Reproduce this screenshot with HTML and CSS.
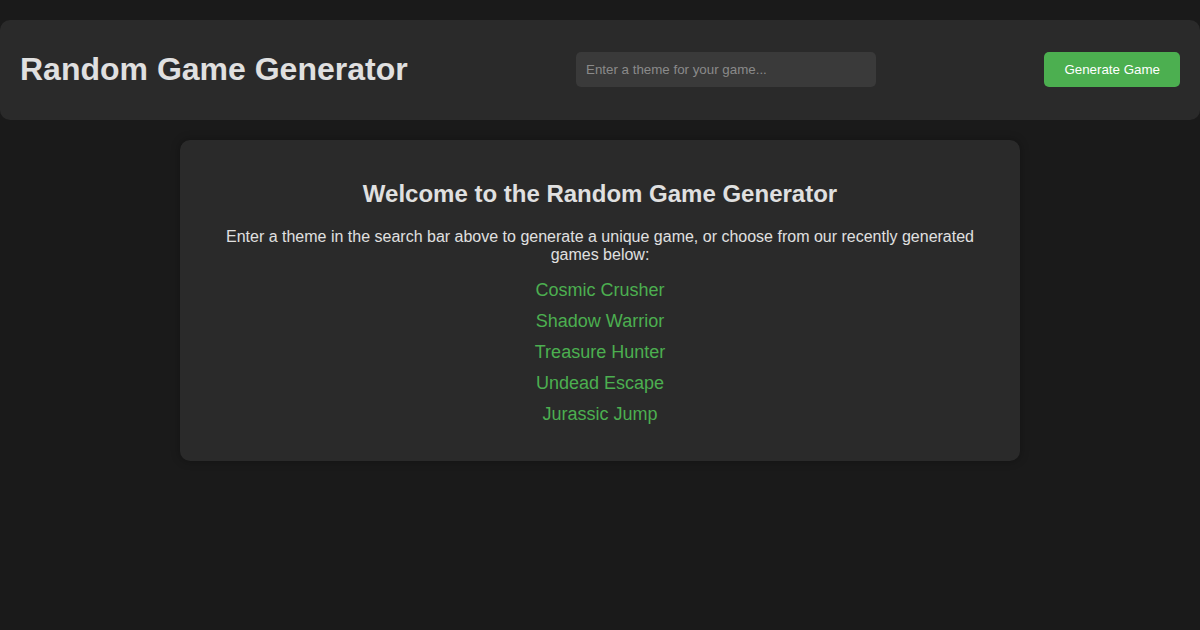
FILE: index.html
```html
<!DOCTYPE html>
<html lang="en">
<head>
  <meta charset="UTF-8" />
  <meta name="viewport" content="width=device-width, initial-scale=1.0" />
  <title>Random Game Generator</title>
  <link rel="stylesheet" href="styles.css">
</head>
<body>
  <header class="header">
    <h1>Random Game Generator</h1>
    <input type="text" id="theme" placeholder="Enter a theme for your game...">
    <button>Generate Game</button>
  </header>

  <div class="container">
    <h2>Welcome to the Random Game Generator</h2>
    <p>Enter a theme in the search bar above to generate a unique game, or choose from our recently generated games below:</p>
    <div class="games">
      <a href="#">Cosmic Crusher</a>
      <a href="#">Shadow Warrior</a>
      <a href="#">Treasure Hunter</a>
      <a href="#">Undead Escape</a>
      <a href="#">Jurassic Jump</a>
    </div>
  </div>
</body>
</html>
```

FILE: styles.css
```css
* {
  box-sizing: border-box;
}
body {
  font-family: "Liberation Sans", Arial, sans-serif;
  background-color: #1a1a1a;
  color: #e0e0e0;
  margin: 0;
  padding: 20px 0;
}
.header {
  display: flex;
  justify-content: space-between;
  align-items: center;
  height: 100px;
  padding: 0 20px 2px;
  background-color: #2a2a2a;
  border-radius: 10px;
}
.header h1 {
  margin: 0;
  font-size: 2em;
}
.header input {
  width: 300px;
  padding: 10px;
  font-size: 13.333px;
  font-family: inherit;
  color: #e0e0e0;
  background-color: #3a3a3a;
  border: none;
  border-radius: 5px;
}
.header input::placeholder {
  color: #8a8a8a;
}
.header button {
  padding: 10px 20px;
  font-size: 13.333px;
  font-family: inherit;
  color: #fff;
  background-color: #4caf50;
  border: none;
  border-radius: 5px;
  cursor: pointer;
}
.container {
  max-width: 840px;
  margin: 20px auto 0;
  padding: 20px;
  background-color: #2a2a2a;
  border-radius: 10px;
  box-shadow: 0 0 10px rgba(0,0,0,0.3);
  text-align: center;
}
.container h2 {
  font-size: 1.5em;
}
.container p {
  font-size: 16px;
}
.games {
  margin-bottom: 16px;
}
.games a {
  display: block;
  margin: 10px 0;
  font-size: 18px;
  color: #4caf50;
  text-decoration: none;
}
```
